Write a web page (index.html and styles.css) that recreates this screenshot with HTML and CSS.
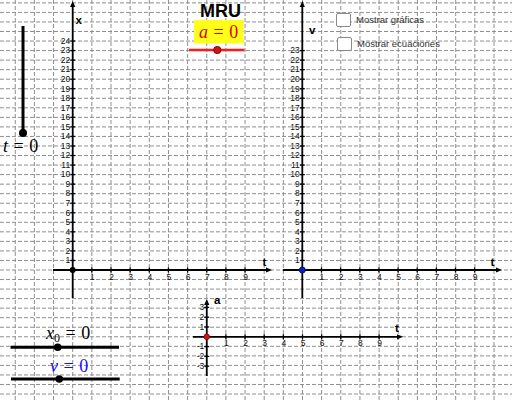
FILE: index.html
```html
<!DOCTYPE html>
<html lang="es">
<head>
<meta charset="utf-8">
<title>MRU</title>
<link rel="stylesheet" href="styles.css">
</head>
<body>
<div class="applet">
  <svg id="canvas" class="canvas" width="512" height="401" viewBox="0 0 512 401" xmlns="http://www.w3.org/2000/svg">
    <g id="grid" class="grid"></g>
    <g id="axes" class="axes"></g>
    <g id="labels" class="labels"></g>
    <!-- left vertical slider t -->
    <line class="slider" x1="23" y1="26" x2="23" y2="133"/>
    <circle class="pt-black" cx="23" cy="133" r="4"/>
    <text class="math" x="3" y="151.5"><tspan class="it">t</tspan> = 0</text>
    <!-- title and a slider -->
    <text class="title" x="200" y="17">MRU</text>
    <rect class="ybox" x="194" y="20" width="49.5" height="23.5"/>
    <text class="math red" x="199" y="38"><tspan class="it">a</tspan> = 0</text>
    <line class="slider-red" x1="189" y1="50" x2="244.5" y2="50"/>
    <circle class="pt-red" cx="217.3" cy="50" r="3.6"/>
    <!-- bottom sliders -->
    <text class="math" x="46" y="339"><tspan class="it">x</tspan><tspan class="sub" dy="3">0</tspan><tspan dy="-3"> = 0</tspan></text>
    <line class="slider" x1="10.5" y1="347.3" x2="119" y2="347.3"/>
    <circle class="pt-black" cx="57.7" cy="347.3" r="3.8"/>
    <text class="math blue" x="50" y="371.5"><tspan class="it">v</tspan> = 0</text>
    <line class="slider" x1="11" y1="379" x2="119.7" y2="379"/>
    <circle class="pt-black" cx="59.3" cy="379" r="3.8"/>
  </svg>
  <label class="check check-1"><span class="box"></span><span class="ctext">Mostrar gráficas</span></label>
  <label class="check check-2"><span class="box"></span><span class="ctext">Mostrar ecuaciones</span></label>
</div>
<script src="app.js"></script>
</body>
</html>
```
FILE: styles.css
```css
html, body {
  margin: 0;
  padding: 0;
  background: #ffffff;
}
.applet {
  position: relative;
  width: 512px;
  height: 401px;
  overflow: hidden;
  background: #ffffff;
  font-family: "Liberation Sans", Arial, sans-serif;
}
.canvas {
  display: block;
}
.grid line {
  stroke: #8f8f8f;
  stroke-width: 1;
  stroke-dasharray: 4 2;
}
.axes line {
  stroke: #000;
  stroke-width: 1.8;
}
.axes line.tick {
  stroke-width: 1.3;
}
.axes polygon {
  fill: #000;
}
.labels text {
  font-family: "Liberation Sans", Arial, sans-serif;
  font-size: 8.5px;
  fill: #111;
}
.labels text.axname {
  font-size: 11.5px;
  font-weight: bold;
  fill: #000;
}
.slider {
  stroke: #000;
  stroke-width: 3;
}
.slider-red {
  stroke: #ff1a1a;
  stroke-width: 2.6;
}
.pt-black {
  fill: #000;
}
.pt-red {
  fill: #d81010;
  stroke: #7a0000;
  stroke-width: 1;
}
.pt-blue {
  fill: #0a1fd0;
  stroke: #00106e;
  stroke-width: 1;
}
.pt-red0 {
  fill: #e01010;
  stroke: #700;
  stroke-width: 0.8;
}
.math {
  font-family: "Liberation Serif", "Times New Roman", serif;
  font-size: 18px;
  word-spacing: 1px;
  fill: #000;
}
.math .it {
  font-style: italic;
}
.math .sub {
  font-size: 12px;
}
.math.red {
  fill: #e00000;
}
.math.blue {
  fill: #1010ff;
}
.title {
  font-family: "Liberation Sans", Arial, sans-serif;
  font-weight: bold;
  font-size: 18px;
  fill: #000;
}
.ybox {
  fill: #ffff1a;
}
.check {
  position: absolute;
  display: flex;
  align-items: center;
  gap: 5px;
  height: 15px;
}
.check-1 {
  left: 336px;
  top: 12px;
}
.check-2 {
  left: 337px;
  top: 36px;
}
.box {
  width: 13px;
  height: 12px;
  border: 1px solid #8a8a8a;
  border-radius: 2px;
  background: #fff;
  box-sizing: content-box;
}
.ctext {
  font-family: "Liberation Sans", Arial, sans-serif;
  font-size: 9.5px;
  color: #333;
  white-space: nowrap;
}
```
FILE: app.js
```js
(function () {
  var NS = 'http://www.w3.org/2000/svg';
  var grid = document.getElementById('grid');
  var axes = document.getElementById('axes');
  var labels = document.getElementById('labels');
  var svg = document.getElementById('canvas');

  function el(tag, attrs, parent) {
    var e = document.createElementNS(NS, tag);
    for (var k in attrs) e.setAttribute(k, attrs[k]);
    parent.appendChild(e);
    return e;
  }
  function line(x1, y1, x2, y2, parent, cls) {
    var a = { x1: x1, y1: y1, x2: x2, y2: y2 };
    if (cls) a['class'] = cls;
    return el('line', a, parent);
  }
  function text(x, y, str, anchor, cls) {
    var a = { x: x, y: y, 'text-anchor': anchor || 'start' };
    if (cls) a['class'] = cls;
    var t = el('text', a, labels);
    t.textContent = str;
    return t;
  }

  var X0 = 72.7, Y0 = 270, DX = 19.15, DY = 9.54;

  // grid
  for (var i = -4; i <= 24; i++) {
    var x = X0 + DX * i;
    if (x > 0 && x < 512) line(x, 0, x, 401, grid);
  }
  for (var j = -28; j <= 14; j++) {
    var y = Y0 + DY * j;
    if (y > 0 && y < 401) line(0, y, 512, y, grid);
  }

  function arrowRight(x, y) {
    el('polygon', { points: (x) + ',' + y + ' ' + (x - 6) + ',' + (y - 2.6) + ' ' + (x - 6) + ',' + (y + 2.6) }, axes);
  }
  function arrowUp(x, y) {
    el('polygon', { points: x + ',' + y + ' ' + (x - 2.6) + ',' + (y + 6) + ' ' + (x + 2.6) + ',' + (y + 6) }, axes);
  }

  function graph(ox, oy, xStart, xEnd, yTop, yBottom, nx, yvals, dy, yname, nameX, nameY, tX, tY, xLabY) {
    line(xStart, oy, xEnd - 4, oy, axes);
    arrowRight(xEnd, oy);
    line(ox, yBottom, ox, yTop + 4, axes);
    arrowUp(ox, yTop);
    for (var k = 1; k <= nx; k++) {
      var x = ox + DX * k;
      line(x, oy - 2.5, x, oy + 2.5, axes, 'tick');
      text(x + 0.5, xLabY, String(k), 'middle');
    }
    yvals.forEach(function (v) {
      var y = oy - dy * v;
      line(ox - 2.5, y, ox + 2.5, y, axes, 'tick');
      text(ox - 2.5, y + 2.8, String(v), 'end');
    });
    text(nameX, nameY, yname, 'start', 'axname');
    text(tX, tY, 't', 'start', 'axname');
  }

  var ylist = [];
  for (var a = 1; a <= 24; a++) ylist.push(a);
  graph(X0, Y0, 53, 272, 1, 298, 9, ylist, DY, 'x', 75.5, 24, 262.5, 265.5, 279.5);

  var vlist = [];
  for (var b = 1; b <= 23; b++) vlist.push(b);
  var RX = 302.3;
  graph(RX, Y0, 283, 502, 1, 298, 9, vlist, DY, 'v', 309, 33.5, 490.5, 265.5, 279.5);

  var BX = X0 + DX * 7, BY = Y0 + DY * 7;
  graph(BX, BY, 193, 403, 299, 376, 9, [3, 2, 1, -1, -2, -3], 9.8, 'a', 214, 303.5, 395, 331.5, 346);

  // origin points
  el('circle', { cx: X0, cy: Y0, r: 3, 'class': 'pt-black' }, svg);
  el('circle', { cx: RX, cy: Y0, r: 3, 'class': 'pt-blue' }, svg);
  el('circle', { cx: BX, cy: BY, r: 2.8, 'class': 'pt-red0' }, svg);
})();
```
